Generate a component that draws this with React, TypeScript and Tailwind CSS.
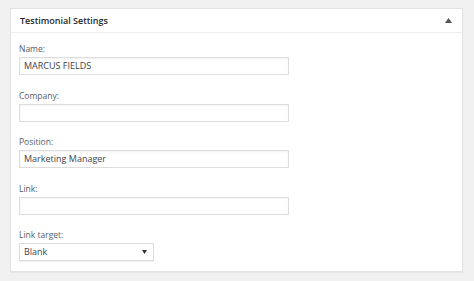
const fields = [
  { label: 'Name:', value: 'MARCUS FIELDS' },
  { label: 'Company:', value: '' },
  { label: 'Position:', value: 'Marketing Manager' },
  { label: 'Link:', value: '' },
]

const App = () => {
  return (
    <div
      className="w-[474px] h-[281px] bg-[#f1f1f1] pt-[8px] pl-[10px]"
      style={{ fontFamily: '"Open Sans", "Noto Sans", sans-serif' }}
    >
      <div className="w-[453px] h-[264px] bg-white border border-[#e2e2e2] shadow-[0_1px_1px_rgba(0,0,0,0.04)]">
        {/* HEADER */}
        <div className="h-[24px] flex items-center justify-between pl-[9px] pr-[10px] border-b border-[#eeeeee]">
          <span className="text-[9px] font-semibold text-[#23282d]">Testimonial Settings</span>
          <svg width="7" height="5" viewBox="0 0 7 5">
            <path d="M0 5 L3.5 0 L7 5 Z" fill="#555" />
          </svg>
        </div>

        {/* FIELDS */}
        <div className="flex flex-col gap-[14.5px] pl-[8px] pt-[10px]">
          {fields.map(field => (
            <div key={field.label} className="flex flex-col gap-[2px]">
              <span className="h-[12px] leading-[12px] text-[8.5px] text-[#555d66]">{field.label}</span>
              <div className="w-[270px] h-[18px] border border-[#dddddd] shadow-[inset_0_1px_2px_rgba(0,0,0,0.05)] flex items-center pl-[4px] text-[9px] text-[#3c434a]">
                {field.value}
              </div>
            </div>
          ))}
          <div className="flex flex-col gap-[2px]">
            <span className="h-[12px] leading-[12px] text-[8.5px] text-[#555d66]">Link target:</span>
            <div className="w-[135px] h-[18px] border border-[#dddddd] shadow-[0_1px_1px_rgba(0,0,0,0.05)] flex items-center justify-between pl-[4px] pr-[6px] text-[9px] text-[#3c434a]">
              <span>Blank</span>
              <svg width="5" height="4" viewBox="0 0 5 4">
                <path d="M0 0 L5 0 L2.5 4 Z" fill="#333" />
              </svg>
            </div>
          </div>
        </div>
      </div>
    </div>
  )
}

export default App
